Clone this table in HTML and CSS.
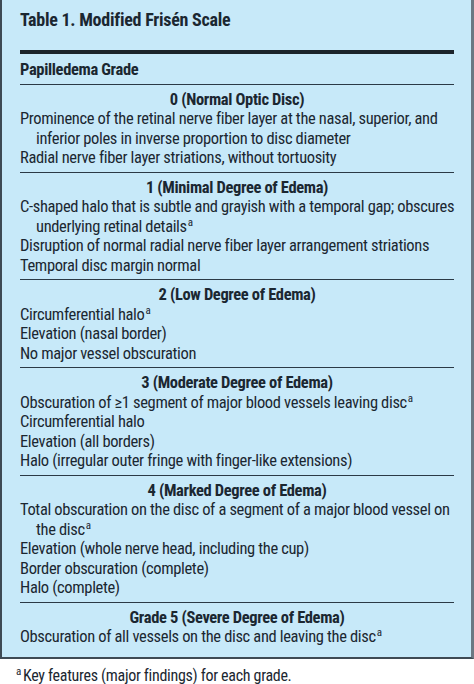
FILE: index.html
```
<!DOCTYPE html>
<html>
<head>
<meta charset="utf-8">
<link rel="stylesheet" href="styles.css">
</head>
<body>
<div class="box">
  <div class="title">Table 1. Modified Frisén Scale</div>
  <div class="thick"></div>
  <div class="colhead">Papilledema Grade</div>
  <div class="sec">
    <div class="hd">0 (Normal Optic Disc)</div>
    <div class="it">Prominence of the retinal nerve fiber layer at the nasal, superior, and inferior poles in inverse proportion to disc diameter</div>
    <div class="it">Radial nerve fiber layer striations, without tortuosity</div>
  </div>
  <div class="sec">
    <div class="hd">1 (Minimal Degree of Edema)</div>
    <div class="it">C-shaped halo that is subtle and grayish with a temporal gap; obscures underlying retinal details<sup>a</sup></div>
    <div class="it">Disruption of normal radial nerve fiber layer arrangement striations</div>
    <div class="it">Temporal disc margin normal</div>
  </div>
  <div class="sec">
    <div class="hd">2 (Low Degree of Edema)</div>
    <div class="it">Circumferential halo<sup>a</sup></div>
    <div class="it">Elevation (nasal border)</div>
    <div class="it">No major vessel obscuration</div>
  </div>
  <div class="sec">
    <div class="hd">3 (Moderate Degree of Edema)</div>
    <div class="it">Obscuration of ≥1 segment of major blood vessels leaving disc<sup>a</sup></div>
    <div class="it">Circumferential halo</div>
    <div class="it">Elevation (all borders)</div>
    <div class="it">Halo (irregular outer fringe with finger-like extensions)</div>
  </div>
  <div class="sec">
    <div class="hd">4 (Marked Degree of Edema)</div>
    <div class="it">Total obscuration on the disc of a segment of a major blood vessel on the disc<sup>a</sup></div>
    <div class="it">Elevation (whole nerve head, including the cup)</div>
    <div class="it">Border obscuration (complete)</div>
    <div class="it">Halo (complete)</div>
  </div>
  <div class="sec last">
    <div class="hd">Grade 5 (Severe Degree of Edema)</div>
    <div class="it">Obscuration of all vessels on the disc and leaving the disc<sup>a</sup></div>
  </div>
</div>
<div class="foot"><sup>a</sup>Key features (major findings) for each grade.</div>
</body>
</html>
```
FILE: styles.css
```
html, body {
  margin: 0;
  padding: 0;
  background: #ffffff;
}
body {
  width: 474px;
  font-family: "Roboto Condensed", "Liberation Sans", sans-serif;
  color: #1b2731;
}
.box {
  background: #c7e9f9;
  border-left: 2px solid #3e4a54;
  border-right: 3px solid #6b7883;
  border-bottom: 2px solid #3e4a54;
  padding: 8px 17px 0 18px;
  height: 649px;
  box-sizing: content-box;
}
.title {
  font-size: 18px;
  font-weight: bold;
  letter-spacing: -0.25px;
  line-height: 24px;
  height: 42px;
}
.thick {
  height: 4px;
  background: #1c242b;
}
.colhead {
  font-size: 16.5px;
  font-weight: bold;
  letter-spacing: -0.35px;
  line-height: 19.5px;
  padding: 6px 0 4px;
  border-bottom: 1.5px solid #2b3a46;
}
.sec {
  font-size: 16.5px;
  letter-spacing: -0.35px;
  line-height: 19.5px;
  padding: 5px 0 4px;
  border-bottom: 1.5px solid #2b3a46;
}
.sec.last {
  border-bottom: none;
}
.hd {
  font-weight: bold;
  text-align: center;
}
.it {
  padding-left: 16px;
  text-indent: -16px;
  margin-right: -10px;
}
sup {
  font-size: 11px;
  line-height: 0;
  vertical-align: 6px;
  margin-left: 1px;
}
.foot {
  font-size: 16px;
  letter-spacing: -0.3px;
  line-height: 19px;
  padding: 7px 0 0 16px;
  color: #1b2731;
}
.foot sup {
  margin: 0 2px 0 0;
}
```
